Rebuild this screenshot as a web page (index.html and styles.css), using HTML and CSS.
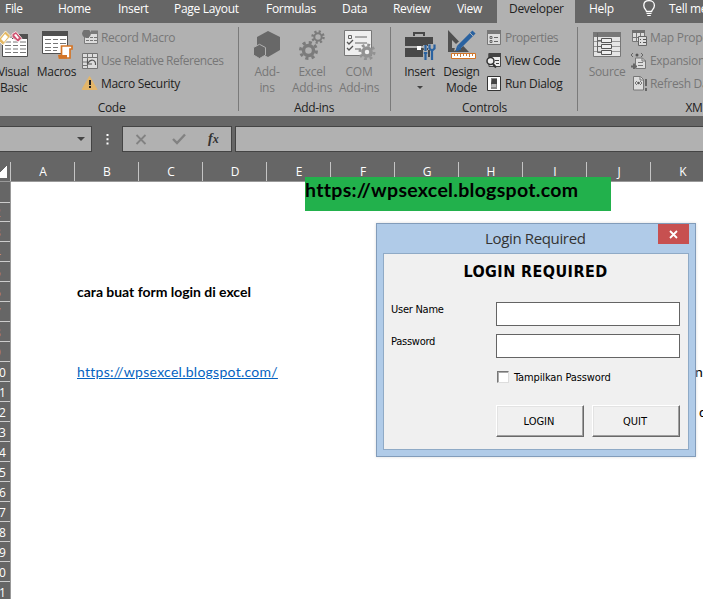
FILE: index.html
```html
<!DOCTYPE html>
<html lang="id">
<head>
<meta charset="utf-8">
<title>Excel - Login Required</title>
<link rel="stylesheet" href="styles.css">
</head>
<body>
<div class="app">
  <nav class="tabs">
    <span class="tab file">File</span><span class="tab home">Home</span><span class="tab insert">Insert</span><span class="tab layout">Page Layout</span><span class="tab formulas">Formulas</span><span class="tab data">Data</span><span class="tab review">Review</span><span class="tab view">View</span><span class="tab active">Developer</span><span class="tab help">Help</span>
    <span class="tab tell"><svg width="14" height="18" viewBox="642 0 14 18"><path d="M646.500 11.500C646 9.500 643.800 8.500 643.800 5.500C643.800 2.500 646 .7 649 .7S654.400 2.500 654.400 5.500C654.400 8.500 652 9.500 651.600 11.500Z" fill="none" stroke="#fff" stroke-width="1.300"/><path d="M646.500 13.500h5M647.300 15.500h3.500" stroke="#fff" stroke-width="1.200"/></svg>Tell me</span>
  </nav>

  <section class="ribbon">
    <div class="group code">
      <div class="items">
        <div class="big vb"><svg width="32" height="32" viewBox="0 28 32 32"><path d="M2.500 37h25v19.500h-25z" fill="#fff" stroke="#505050"/><path d="M12 34h16v5H12z" fill="#505050"/><path d="M5 42h6m2 0h5m2 0h6M5 45.500h6m2 0h5m2 0h6M5 49h6m2 0h5m2 0h6M5 52.500h6m2 0h5m2 0h6" stroke="#777"/><path d="M-2 40L5.500 31l5 5-7.500 9z" fill="#e4b862" stroke="#f7edda"/><path d="M1 39l4-5 3 3-4 5z" fill="#fff"/><path d="M12 34l4-2.500 6 7-4 3.500-6-5z" fill="#cf5371" stroke="#f5dce2"/><path d="M14 35l2-1 3 4-1.500 1z" fill="#fff"/></svg><span>Visual<br>Basic</span></div>
        <div class="big macros"><svg width="32" height="32" viewBox="41 28 32 32"><path d="M42.500 32h25v21.500h-25z" fill="#fff" stroke="#505050"/><path d="M42 31h26v5H42z" fill="#505050"/><path d="M45 39.500h6m2 0h5m2 0h6M45 43.500h6m2 0h5m2 0h6M45 47.500h6m2 0h5M45 50.500h6m2 0h4" stroke="#777"/><path d="M61.500 55.500V46h10.500v3h-2v9H59.500v-2.500z" fill="#fff" stroke="#d47425" stroke-width="1.700"/><path d="M58 55h9v3.500h-8z" fill="#d47425"/></svg><span>Macros</span></div>
        <div class="smalls">
          <div class="row off"><svg width="17" height="16" viewBox="82 30 17 16"><path d="M84.500 33h13v10.500h-13z" fill="#ddd" stroke="#7b7b7b"/><path d="M91 30.500h7V34h-7z" fill="#7b7b7b"/><path d="M86 37.500h3m1 0h3m1 0h3M86 40.500h3m1 0h3m1 0h3" stroke="#777"/><circle cx="86.500" cy="33.500" r="4.400" fill="#727272"/></svg><span class="record">Record Macro</span></div>
          <div class="row off"><svg width="17" height="16" viewBox="82 52 17 16"><path d="M82.500 52.500h15v15h-15z" fill="#ddd" stroke="#747474"/><path d="M82 56.500h16M82 61h5M82 64.500h5M87.500 52v16M92.500 52v5M93 64.500h5" stroke="#747474"/><path d="M88 58h9v9h-9z" fill="#ddd"/><path d="M88 62c3-5 8-3 7.500 2M87.500 58.500V63H92" fill="none" stroke="#555" stroke-width="1.200"/></svg><span class="relative">Use Relative References</span></div>
          <div class="row"><svg width="17" height="16" viewBox="82 76 17 16"><path d="M89.500 76.500L97 89.500H82z" fill="#e3b66b" stroke="#e3b66b" stroke-linejoin="round"/><path d="M89 80h2v5h-2zm0 6h2v2h-2z" fill="#222"/></svg><span class="security">Macro Security</span></div>
        </div>
      </div>
      <div class="caption">Code</div>
    </div>

    <div class="group addins">
      <div class="items">
        <div class="big off a1"><svg width="32" height="32" viewBox="251 28 32 32"><path d="M268 31l12 6v13l-12 7-11-6V37z" fill="#686868"/><path d="M259.500 44.300l6 3.200v7.500l-6 3.500-6-3.500v-7.500z" fill="#686868" stroke="#b1b1b1"/></svg><span>Add-<br>ins</span></div>
        <div class="big off a2"><svg width="32" height="32" viewBox="296 28 32 32"><g fill="none" stroke="#7b7b7b"><circle cx="308.500" cy="50.500" r="5" stroke-width="3.400"/><circle cx="308.500" cy="50.500" r="8" stroke-width="3" stroke-dasharray="3.140 3.143"/><circle cx="318" cy="37" r="3.700" stroke-width="2"/><circle cx="318" cy="37" r="5.500" stroke-width="2.500" stroke-dasharray="2.160 2.160"/></g></svg><span>Excel<br>Add-ins</span></div>
        <div class="big off a3"><svg width="34" height="32" viewBox="342 28 34 32"><path d="M344.500 30.500h27v25h-27z" fill="#efefef" stroke="#777"/><path d="M348.500 35.500h3v3h-3zM355 37h12M355 43h12M355 49h6" fill="none" stroke="#666"/><path d="M347 42l2 2 4-4M347 48l2 2 4-4" fill="none" stroke="#555" stroke-width="1.300"/><g fill="none" stroke="#929292"><circle cx="367" cy="52" r="4" stroke-width="3.500"/><circle cx="367" cy="52" r="7" stroke-width="3" stroke-dasharray="2.750 2.750"/></g></svg><span>COM<br>Add-ins</span></div>
      </div>
      <div class="caption">Add-ins</div>
    </div>

    <div class="group controls">
      <div class="items">
        <div class="big c1"><svg width="32" height="32" viewBox="405 28 32 32"><path d="M415 36v-3h10v3" fill="none" stroke="#484848" stroke-width="2"/><path d="M406 37h28v9h-28zM406 48h28v9h-28z" fill="#484848"/><path d="M418 46h4v4h-4z" fill="#fff"/><path d="M424 45h4v5h1v8c0 3-5 3-5 0v-8h1zM429 44h8v16h-6V50h-2z" fill="#b1b1b1"/><path d="M426.500 45v6M426.500 53v7M424.800 53h3.500" stroke="#2a62a0" stroke-width="2.200"/><path d="M430.500 44.500v4l2.500 2 2.500-2v-4M433 50v10" fill="none" stroke="#2a62a0" stroke-width="2.200"/></svg><span>Insert</span><i class="down"></i></div>
        <div class="big c2"><svg width="32" height="32" viewBox="446 28 32 32"><path d="M448 30v22h21zM452 40l8 8h-8z" fill="#505050" fill-rule="evenodd"/><path d="M454 51l2-7 15-13 5 4-15 13z" fill="#b1b1b1"/><path d="M456 51l1.500-5 3.500 3z" fill="#2a62a0" stroke="#2a62a0"/><path d="M459 47l15-15" stroke="#2a62a0" stroke-width="4.500"/><path d="M469.500 32.500l4 4" stroke="#b1b1b1"/><path d="M451.500 53.500h24v5h-24z" fill="#fff" stroke="#d47425"/><path d="M454.500 54v2m3-2v2m3-2v3m3-3v2m3-2v2m3-2v3m3-3v2" stroke="#c47b40"/></svg><span>Design<br>Mode</span></div>
        <div class="smalls">
          <div class="row off"><svg width="17" height="16" viewBox="486 30 17 16"><path d="M487.500 30.500h13v14h-13z" fill="#ddd" stroke="#777"/><path d="M487 30h14v4h-14z" fill="#777"/><path d="M490 36.500h2v2h-2zM490 40.500h2v2h-2zM494 37.500h4M494 41.500h4" stroke="#666" fill="none"/></svg><span class="prop">Properties</span></div>
          <div class="row"><svg width="17" height="16" viewBox="486 53 17 16"><path d="M489 54h11.500v12.500H489z" fill="#eee" stroke="#444"/><path d="M488.500 53H501v4h-12.500z" fill="#444"/><path d="M495 60.500h4M496 63.500h3" stroke="#444"/><circle cx="490.500" cy="61" r="3.500" fill="#eee" stroke="#333" stroke-width="1.500"/><path d="M493 64l3 3.500" stroke="#333" stroke-width="2"/></svg><span class="vcode">View Code</span></div>
          <div class="row"><svg width="17" height="16" viewBox="486 76 17 16"><path d="M487.500 76.500h13v14h-13z" fill="#fff" stroke="#333"/><path d="M491 78h6v11h-6z" fill="#888"/><path d="M492 79h5v5h-6z" fill="#444"/><path d="M492 84h4v3h-5z" fill="#bbb"/></svg><span class="dialogt">Run Dialog</span></div>
        </div>
      </div>
      <div class="caption">Controls</div>
    </div>

    <div class="group xml">
      <div class="items">
        <div class="big off x1"><svg width="32" height="32" viewBox="591 28 32 32"><path d="M593.500 32.500h27v24h-27z" fill="#e5e5e5" stroke="#777"/><path d="M593 32h28v5h-28z" fill="#777"/><path d="M594 41.500h26M594 46.500h26M594 51.500h26" stroke="#999"/><path d="M597.500 33v19.500h4M597.500 40.500h4M597.500 46.500h4" fill="none" stroke="#666"/><path d="M601.500 38.500h10v4h-10zM601.500 44.500h10v4h-10zM601.500 50.500h10v4h-10z" fill="#eee" stroke="#555"/></svg><span>Source</span></div>
        <div class="smalls">
          <div class="row off"><svg width="17" height="16" viewBox="631 29 17 16"><path d="M632.500 30.500h12v10h-12zM636.500 30v11M640.500 30v11M632 36.500h12" fill="#ddd" stroke="#777"/><path d="M632 29h13v3h-13z" fill="#707070"/><path d="M638.500 35.500h8v9h-8z" fill="#ddd" stroke="#666"/><path d="M640 38.500h1m2 0h3m-6 3h1m2 0h3" stroke="#555"/></svg><span class="map">Map Properties</span></div>
          <div class="row off"><svg width="17" height="16" viewBox="631 52 17 16"><path d="M635.500 57h7l3 3v7.500h-10z" fill="#ddd" stroke="#777"/><path d="M642 57v3h4M638 61.500h5M638 64.500h5" fill="none" stroke="#777"/><path d="M633 52l-2 2 2 2m8-4l2 2-2 2" fill="none" stroke="#666"/><circle cx="637" cy="54" r="1.500" fill="#555"/><path d="M631 65.500h6M634 62.500v6" stroke="#666" stroke-width="2"/></svg><span class="exp">Expansion Packs</span></div>
          <div class="row off"><svg width="17" height="16" viewBox="631 76 17 16"><path d="M633.500 76.500h7l3 3v10.500h-10z" fill="#ddd" stroke="#777"/><path d="M640 77v3h4M637 81l-2 2 2 2m3-4l2 2-2 2" fill="none" stroke="#777"/><circle cx="638.500" cy="83" r="1.300" fill="#555"/><path d="M646 79v7m0 2v3" stroke="#666" stroke-width="2"/></svg><span class="refresh">Refresh Data</span></div>
        </div>
      </div>
      <div class="caption">XML</div>
    </div>
  </section>

  <div class="formula">
    <div class="name"><i class="down"></i></div>
    <svg class="dots" width="3" height="12" viewBox="0 0 3 12"><path d="M.5 1h2v2h-2zm0 4.300h2v2h-2zm0 4.300h2v2h-2z" fill="#fff"/></svg>
    <div class="fx"><svg width="12" height="12" viewBox="0 0 12 12"><path d="M1.500 2l9 9m0-9l-9 9" stroke="#828282" stroke-width="1.800"/></svg><svg width="14" height="12" viewBox="0 0 14 12"><path d="M1 6l4 4 8-8.500" fill="none" stroke="#828282" stroke-width="2.400"/></svg><span>f<small>x</small></span></div>
    <div class="input"></div>
  </div>

  <div class="columns"><div class="corner"></div><b>A</b><b>B</b><b>C</b><b>D</b><b>E</b><b>F</b><b>G</b><b>H</b><b>I</b><b>J</b><b>K</b></div>

  <div class="sheet">
    <div class="numbers"><b>1</b><b>2</b><b>3</b><b>4</b><b>5</b><b>6</b><b>7</b><b>8</b><b>9</b><b>10</b><b>11</b><b>12</b><b>13</b><b>14</b><b>15</b><b>16</b><b>17</b><b>18</b><b>19</b><b>20</b><b>21</b></div>
    <div class="cells">
      <div class="cell r6"><strong>cara buat form login di excel</strong></div>
      <div class="cell r10"><a>https://wpsexcel.blogspot.com/</a><span class="n">n</span></div>
      <div class="cell r12"><span class="d">d</span></div>
    </div>
  </div>

  <div class="banner"><span>https://wpsexcel.blogspot.com</span></div>

  <div class="window">
    <header><span>Login Required</span><div class="close"><svg width="9" height="9" viewBox="0 0 9 9"><path d="M1 1l7 7m0-7L1 8" stroke="#fff" stroke-width="1.800"/></svg></div></header>
    <main>
      <h1>LOGIN REQUIRED</h1>
      <div class="field"><label>User Name</label><div class="box"></div></div>
      <div class="field"><label>Password</label><div class="box"></div></div>
      <div class="check"><i></i><span>Tampilkan Password</span></div>
      <div class="buttons"><div class="btn login">LOGIN</div><div class="btn quit">QUIT</div></div>
    </main>
  </div>
</div>
</body>
</html>
```
FILE: styles.css
```css
* { box-sizing: border-box; }
body { margin: 0; overflow: hidden; font: 12px/16px "Open Sans", sans-serif; color: #222; }
svg { display: block; flex: none; }
.app { position: relative; width: 703px; height: 599px; overflow: hidden; background: #fff; }

.tabs { display: flex; height: 23px; background: #666; color: #fff; white-space: nowrap; letter-spacing: -.3px; }
.tab { flex: none; height: 23px; line-height: 17px; }
.file { width: 58px; padding-left: 5px; }
.home { width: 60px; }
.insert { width: 56px; }
.layout { width: 92px; }
.formulas { width: 76px; }
.data { width: 51px; }
.review { width: 64px; }
.view { width: 40px; }
.active { width: 78px; padding-left: 12px; background: #b1b1b1; color: #222; }
.help { width: 67px; padding-left: 14px; }
.tell { display: flex; gap: 13px; }

.ribbon { display: flex; height: 93px; background: #b1b1b1; white-space: nowrap; letter-spacing: -.3px; }
.group { position: relative; flex: none; height: 93px; }
.group::after { content: ""; position: absolute; right: 0; top: 4px; width: 1px; height: 84px; background: #7a7a7a; }
.code { width: 254px; margin-left: -15px; }
.addins { width: 152px; }
.controls { width: 187px; }
.xml { width: 238px; }
.items { display: flex; height: 76px; }
.code .items { padding-left: 15px; }
.addins .items { padding-left: 5px; }
.controls .items { padding-left: 7px; }
.xml .items { padding-left: 10px; }
.caption { text-align: center; line-height: 17px; }
.code .caption { padding-right: 1px; }
.addins .caption { padding-right: 2px; }
.big { display: flex; flex: none; flex-direction: column; align-items: center; padding-top: 5px; text-align: center; }
.big span { margin-top: 4px; }
.off { color: #777; }
.vb { width: 28px; align-items: flex-start; }
.vb span { margin-left: -2px; }
.macros { width: 54px; padding-left: 3px; }
.a1 { width: 46px; }
.a2 { width: 44px; }
.a3 { width: 50px; }
.c1 { width: 43px; }
.c2 { width: 41px; margin-right: 4px; }
.x1 { width: 38px; margin-right: 5px; }
.down { width: 0; height: 0; border: 3px solid transparent; border-top-color: #444; border-bottom: 0; }
.c1 .down { margin-top: 6px; }
.smalls { padding-top: 3px; }
.row { display: flex; align-items: center; gap: 2px; height: 23px; }
.relative { letter-spacing: -.48px; }
.prop { letter-spacing: -.5px; }

.formula { display: flex; align-items: center; height: 46px; background: #666; }
.name, .fx, .input { height: 26px; border: 1px solid #444; background: #b1b1b1; }
.name { display: flex; align-items: center; justify-content: flex-end; width: 92px; border-left: 0; padding-right: 6px; }
.name .down { border-width: 4px 4px 0; }
.dots { margin: 0 14px; }
.fx { display: flex; align-items: center; gap: 25px; width: 110px; padding-left: 12px; margin-left: -1px; }
.fx span { font: italic bold 14px/20px "Liberation Serif", serif; color: #333; margin-left: -3px; }
.fx small { font-size: 12px; }
.input { flex: 1; margin-left: 3px; border-right: 0; }

.columns { display: flex; height: 20px; background: #666; border-bottom: 1px solid #999; color: #fff; }
.columns b { flex: none; width: 64px; border-right: 1px solid #c4c4c4; text-align: center; padding-left: 1px; font-weight: 400; line-height: 20px; }
.corner { flex: none; width: 11px; border-right: 1px solid #c4c4c4; background: linear-gradient(135deg, transparent 50%, #fff 50%) -5px 4px / 12px 12px no-repeat; }
.sheet { display: flex; height: 417px; }
.numbers { flex: none; width: 11px; border-right: 1px solid #999; background: #666; color: #fff; overflow: hidden; }
.numbers b { display: block; width: 32px; height: 20px; margin-left: -17px; border-bottom: 1px solid #ccc; text-align: center; font-weight: 400; line-height: 21px; }
.numbers b:nth-child(-n+9) { color: #c8957c; padding-right: 3px; }
.numbers b:first-child { height: 21px; margin-bottom: -1px; }
.numbers b + b { padding-top: 1px; line-height: 19px; }
.cells { display: grid; grid-template-rows: repeat(21, 20px); flex: 1; padding-left: 66px; font: 14px/20px Lato, sans-serif; color: #000; }
.cell { display: flex; white-space: nowrap; }
.r6 { grid-row: 6; letter-spacing: -.03px; }
.r10 { grid-row: 10; }
.r12 { grid-row: 12; }
.cell a { width: 200px; color: #0563c1; letter-spacing: .27px; text-decoration: underline; }
.n { margin-left: 418px; }
.d { margin-left: 622px; }

.banner { position: absolute; left: 305px; top: 177px; width: 306px; height: 34px; background: #22b14c; color: #000; font: bold 19.5px/26px Lato, sans-serif; letter-spacing: .3px; white-space: nowrap; }

.window { position: absolute; left: 376px; top: 223px; width: 320px; height: 234px; border: 1px solid #829cba; background: #b0cbe8; padding: 0 6px 6px; box-shadow: 0 0 3px #ddd; }
.window header { display: flex; height: 29px; justify-content: flex-end; font-size: 15px; line-height: 29px; color: #333; }
.window header span { width: 173px; letter-spacing: -.35px; }
.close { display: grid; width: 31px; height: 20px; place-items: center; background: #c75050; }
.window main { height: 197px; border: 1px solid #8faac6; background: #f0f0f0; padding: 0 8px 0 7px; font: 11px/16px "DejaVu Sans Condensed", sans-serif; color: #000; }
h1 { margin: 0 0 20px; height: 28px; text-align: center; font: bold 16px/36px "DejaVu Sans Condensed", sans-serif; letter-spacing: .43px; }
.field { display: flex; justify-content: space-between; height: 24px; margin-bottom: 8px; letter-spacing: -.25px; }
.box { width: 184px; border: 1px solid #646464; background: #fff; }
.check { display: flex; align-items: center; gap: 5px; height: 14px; margin: 12px 0 0 106px; letter-spacing: -.13px; }
.check i { width: 12px; height: 12px; border: 1px solid #777; border-right-color: #ddd; border-bottom-color: #ddd; background: #fff; box-shadow: inset 1px 1px #aaa; }
.check span { padding-top: 2px; }
.buttons { display: flex; justify-content: flex-end; gap: 8px; margin-top: 21px; }
.btn { width: 88px; height: 32px; border: 1px solid; border-color: #fff #696969 #696969 #fff; box-shadow: inset -1px -1px #a0a0a0, inset 1px 1px #e3e3e3; text-align: center; padding-right: 2px; line-height: 32px; }
```
